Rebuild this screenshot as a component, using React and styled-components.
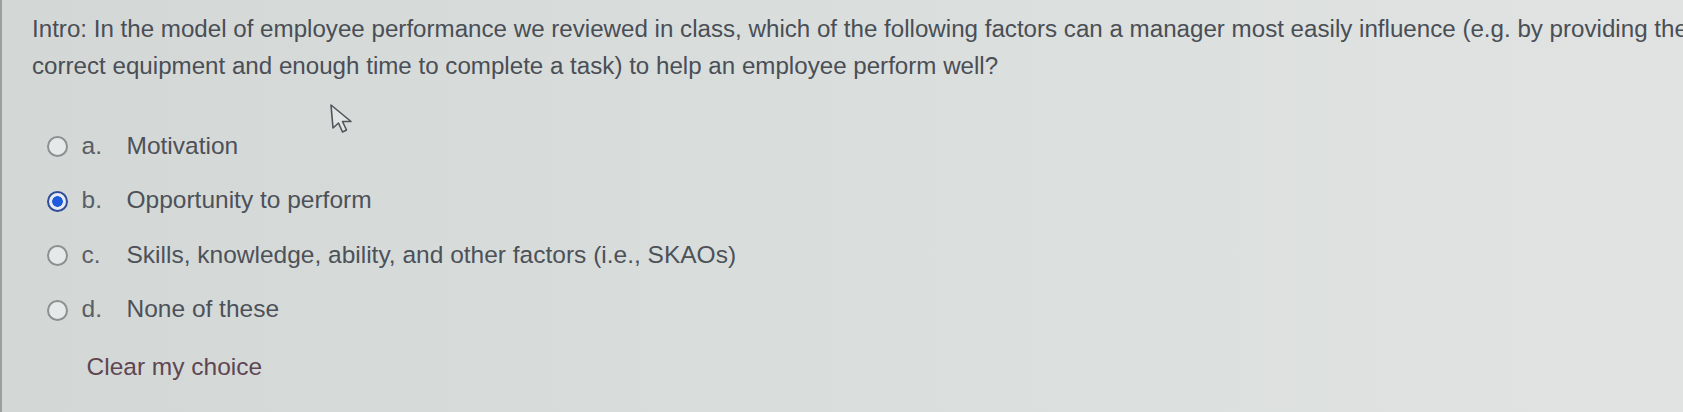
import React, { useState } from 'react';
import styled, { createGlobalStyle } from 'styled-components';

const GlobalStyle = createGlobalStyle`
  html, body {
    margin: 0;
    padding: 0;
    overflow: hidden;
  }
  body {
    background: linear-gradient(90deg, #d3d8d7 0%, #d9dedd 45%, #e0e3e2 100%);
    font-family: "Liberation Sans", Arial, sans-serif;
  }
`;

const options = [
  { id: 'a', text: 'Motivation' },
  { id: 'b', text: 'Opportunity to perform' },
  { id: 'c', text: 'Skills, knowledge, ability, and other factors (i.e., SKAOs)' },
  { id: 'd', text: 'None of these' }
];

const App = () => {
  const [choice, setChoice] = useState('b');

  return (
    <>
      <GlobalStyle />
      <Page>
        <Question>
          <Line>
            Intro: In the model of employee performance we reviewed in class, which of the following factors can a manager most easily influence (e.g. by providing the
          </Line>
          <Line>
            correct equipment and enough time to complete a task) to help an employee perform well?
          </Line>
        </Question>

        <OptionList>
          {options.map((opt) => (
            <Option key={opt.id} onClick={() => setChoice(opt.id)}>
              <Radio checked={choice === opt.id} />
              <Letter>{opt.id}.</Letter>
              <OptionText>{opt.text}</OptionText>
            </Option>
          ))}
          <ClearLink href="#" onClick={(e) => { e.preventDefault(); setChoice(null); }}>
            Clear my choice
          </ClearLink>
        </OptionList>

        <Cursor width="26" height="32" viewBox="0 0 26 32">
          <path
            d="M2 2 L4 25 L9.5 20 L13.5 29 L17.5 27 L13.5 18.5 L22 18.5 Z"
            fill="#e1e5e4"
            stroke="#50555a"
            strokeWidth="1.6"
            strokeLinejoin="round" />
        </Cursor>
      </Page>
    </>
  );
};

export default App;

const Page = styled.div`
  position: relative;
  height: 412px;
  box-sizing: border-box;
  padding: 11px 0 0 30px;
  border-left: 2px solid #9aa09f;
`;

const Question = styled.div`
  font-size: 24.15px;
  line-height: 36.5px;
  color: #4a4e55;
`;

const Line = styled.div`
  white-space: nowrap;
`;

const OptionList = styled.div`
  display: flex;
  flex-direction: column;
  gap: 18.6px;
  margin-top: 43.7px;
  padding-left: 14.5px;
`;

const Option = styled.label`
  display: flex;
  align-items: center;
  height: 36px;
  font-size: 24.5px;
  line-height: 36px;
  color: #4d5158;
  cursor: pointer;
`;

const Radio = styled.span`
  box-sizing: border-box;
  width: 21px;
  height: 21px;
  margin-top: 2px;
  border-radius: 50%;
  flex-shrink: 0;
  border: ${({ checked }) => (checked ? '2.5px solid #314c98' : '2px solid #8d9091')};
  background: ${({ checked }) => (checked
    ? 'radial-gradient(circle, #1f5bdc 0 5px, #e6eaf2 5.6px)'
    : '#e6e9e9')};
`;

const Letter = styled.span`
  width: 45px;
  margin-left: 14px;
  color: #5a5e65;
`;

const OptionText = styled.span`
  white-space: nowrap;
`;

const ClearLink = styled.a`
  align-self: flex-start;
  margin-left: 40px;
  margin-top: 2.5px;
  font-size: 24.5px;
  line-height: 36px;
  color: #5e4652;
  text-decoration: none;
`;

const Cursor = styled.svg`
  position: absolute;
  left: 327px;
  top: 103px;
`;
